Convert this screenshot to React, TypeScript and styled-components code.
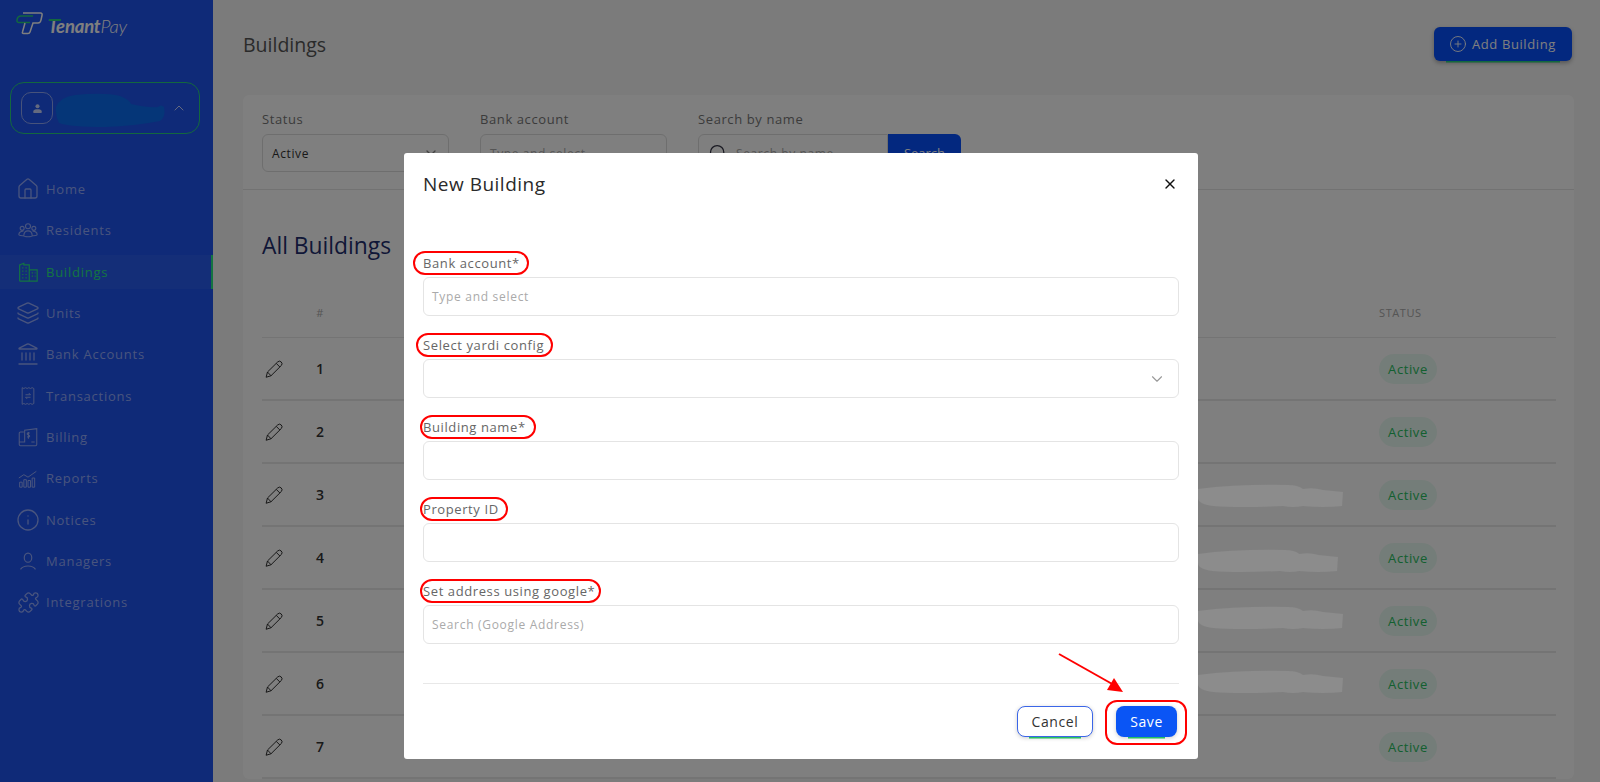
import React from 'react';
import styled, { createGlobalStyle } from 'styled-components';
import { ChevronDown, ChevronUp, CirclePlus, House, Info, Landmark, Layers, Puzzle, Search, X } from 'lucide-react';

const GlobalStyle = createGlobalStyle`
  html, body {
    margin: 0;
    height: 100%;
    overflow: hidden;
    font-family: 'Open Sans', 'Liberation Sans', sans-serif;
    background: #f6f6f6;
  }
  * { box-sizing: border-box; }
`;

const Layout = styled.div`
  display: flex;
  width: 1600px;
  height: 782px;
  overflow: hidden;
`;

const Sidebar = styled.aside`
  flex: 0 0 213px;
  background: #1e54f0;
  padding-top: 12px;
`;

const Logo = styled.div`
  display: flex;
  align-items: center;
  gap: 5px;
  height: 24px;
  padding-left: 16px;
`;

const LogoText = styled.div`
  font-family: Lato, 'Liberation Sans', sans-serif;
  font-style: italic;
  font-size: 18.5px;
  color: #fff;
  letter-spacing: -0.2px;
  margin-top: 4px;

  b {
    position: relative;
    font-weight: 700;
  }
  b::before {
    content: '';
    position: absolute;
    left: 1px;
    top: 4px;
    width: 12px;
    height: 2px;
    background: #26d07c;
  }
  span {
    font-weight: 300;
  }
`;

const UserBox = styled.div`
  display: flex;
  align-items: center;
  height: 52px;
  margin: 46px 13px 0 10px;
  padding-left: 10px;
  border: 1.5px solid #26d07c;
  border-radius: 14px;
  color: #c8d4ff;
`;

const Avatar = styled.div`
  display: flex;
  align-items: center;
  justify-content: center;
  flex: 0 0 32px;
  height: 32px;
  border: 1px solid #8fa7f7;
  border-radius: 10px;
`;

const Scribble = styled.svg`
  flex: 0 0 110px;
  height: 34px;
  margin: 4px 0 0 2px;
`;

const Collapse = styled.div`
  display: flex;
  margin-left: 6px;
`;

const Nav = styled.nav`
  display: flex;
  flex-direction: column;
  gap: 7.33px;
  margin-top: 38px;
`;

const NavItem = styled.div<{ $active?: boolean }>`
  display: flex;
  align-items: center;
  gap: 8px;
  height: 34px;
  padding-left: 18px;
  font-size: 13px;
  letter-spacing: 0.75px;
  color: ${p => (p.$active ? '#26e884' : '#93aafc')};
  background: ${p => (p.$active ? 'rgba(255, 255, 255, 0.05)' : 'transparent')};
  border-right: 2px solid ${p => (p.$active ? '#26e884' : 'transparent')};
`;

const NavIcon = styled.span`
  display: flex;
  align-items: center;
  justify-content: center;
  width: 20px;
  min-width: 0;
  flex: 0 0 20px;
  height: 20px;

  svg {
    flex-shrink: 0;
  }
`;

const Main = styled.main`
  flex: 1;
  padding: 0 26px 0 30px;
`;

const PageHead = styled.header`
  display: flex;
  align-items: center;
  justify-content: space-between;
  height: 88px;
  margin-bottom: 7px;
  padding-right: 2px;
`;

const PageTitle = styled.h1`
  margin: 0;
  font-size: 19.5px;
  font-weight: 400;
  color: #555;
`;

const AddButton = styled.button`
  display: flex;
  align-items: center;
  gap: 5px;
  width: 138px;
  height: 34px;
  padding: 0 0 0 15px;
  border: 0;
  border-radius: 6px;
  background: #0650fe;
  color: #fff;
  font: inherit;
  font-size: 13px;
  letter-spacing: 0.6px;
  box-shadow: 0 13.5px 0 -12px #26d07c, 0 2px 4px rgba(0, 0, 0, 0.3);
`;

const Card = styled.section`
  background: #fff;
  border-radius: 6px;
`;

const Filters = styled.div`
  display: flex;
  gap: 31px;
  padding: 14px 19px 17px;
  border-bottom: 1px solid #e4e4e4;
`;

const FilterGroup = styled.div<{ $width: number }>`
  width: ${p => p.$width}px;
`;

const FilterLabel = styled.div`
  height: 20px;
  margin-bottom: 5px;
  font-size: 13px;
  line-height: 20px;
  letter-spacing: 0.6px;
  color: #777;
`;

const FilterInput = styled.div<{ $muted?: boolean }>`
  display: flex;
  align-items: center;
  justify-content: space-between;
  height: 38px;
  padding: 0 9px;
  border: 1px solid #ddd;
  border-radius: 6px;
  font-size: 12px;
  letter-spacing: 0.6px;
  color: ${p => (p.$muted ? '#aaa' : '#333')};
`;

const SearchBar = styled.div`
  display: flex;
`;

const SearchField = styled(FilterInput)`
  flex: 1;
  justify-content: flex-start;
  gap: 8px;
  border-radius: 6px 0 0 6px;
`;

const SearchButton = styled.button`
  flex: 0 0 73px;
  height: 38px;
  border: 0;
  border-radius: 0 6px 6px 0;
  background: #0650fe;
  color: #fff;
  font: inherit;
  font-size: 13px;
`;

const TableArea = styled.div`
  padding: 0 18px 0 19px;
`;

const SectionTitle = styled.h2`
  margin: 40px 0 26px;
  font-size: 22.8px;
  line-height: 32px;
  font-weight: 400;
  color: #1f2e6e;
`;

const HeadRow = styled.div`
  display: flex;
  align-items: center;
  height: 50px;
  border-bottom: 1px solid #e8e8e8;
  font-size: 11px;
  letter-spacing: 0.6px;
  color: #aaa;
`;

const Row = styled.div`
  display: flex;
  align-items: center;
  height: 63px;
  border-bottom: 2px solid #e8e8e8;
  font-size: 14px;
  font-weight: 600;
  color: #333;
`;

const EditCell = styled.div`
  display: flex;
  flex: 0 0 53px;
  padding-left: 3px;
`;

const IndexCell = styled.div`
  flex: 0 0 10px;
  text-align: center;
`;

const StatusCell = styled.div`
  margin-left: auto;
  width: 177px;
`;

const StatusPill = styled.span`
  display: inline-block;
  width: 58px;
  height: 30px;
  border-radius: 15px;
  background: rgba(38, 208, 124, 0.1);
  color: #26c060;
  font-size: 13px;
  font-weight: 400;
  line-height: 30px;
  letter-spacing: 0.6px;
  text-align: center;
`;

const Overlay = styled.div`
  position: fixed;
  inset: 0;
  display: flex;
  justify-content: center;
  align-items: flex-start;
  padding: 153px 0 0 2px;
  background: rgba(0, 0, 0, 0.5);
`;

const Modal = styled.div`
  position: relative;
  width: 794px;
  height: 606px;
  padding: 17px 19px 0;
  background: #fff;
  border-radius: 3px;
`;

const ModalHead = styled.div`
  display: flex;
  align-items: center;
  justify-content: space-between;
  height: 28px;
  padding-right: 1px;
`;

const ModalTitle = styled.h3`
  margin: 0;
  font-size: 19px;
  font-weight: 400;
  letter-spacing: 0.5px;
  color: #2a2a2a;
`;

const Form = styled.div`
  display: flex;
  flex-direction: column;
  gap: 19px;
  margin-top: 55px;
`;

const Label = styled.label`
  display: block;
  height: 20px;
  margin-bottom: 4px;
  font-size: 13px;
  line-height: 20px;
  letter-spacing: 0.6px;
  color: #666;
`;

/* hand-drawn red ring on the screenshot */
const Ring = styled.span<{ $left: number; $right: number }>`
  position: relative;

  &::after {
    content: '';
    position: absolute;
    top: -3px;
    bottom: -3px;
    left: -${p => p.$left}px;
    right: -${p => p.$right}px;
    border: 2px solid #f00;
    border-radius: 12px;
  }
`;

const Input = styled.div`
  display: flex;
  align-items: center;
  height: 39px;
  padding: 0 12px 0 8px;
  border: 1px solid #e4e4e4;
  border-radius: 6px;
  font-size: 12px;
  letter-spacing: 0.7px;
  color: #aaa;

  svg {
    margin-left: auto;
  }
`;

const Footer = styled.div`
  display: flex;
  justify-content: flex-end;
  gap: 23px;
  margin-top: 39px;
  padding: 22px 2px 0 0;
  border-top: 1px solid #e8e8e8;
`;

const Button = styled.button<{ $primary?: boolean }>`
  position: relative;
  width: ${p => (p.$primary ? 61 : 76)}px;
  height: 31px;
  padding: 0;
  border: ${p => (p.$primary ? '0' : '1px solid #3b66e8')};
  border-radius: 8px;
  background: ${p => (p.$primary ? '#0a55f5' : '#fff')};
  color: ${p => (p.$primary ? '#fff' : '#333')};
  font: inherit;
  font-size: 14px;
  letter-spacing: 0.6px;
  box-shadow: 0 13.5px 0 -12px #26c060, 0 1px 4px rgba(0, 0, 0, 0.2);
`;

const SaveRing = styled.div`
  position: absolute;
  top: -6px;
  right: -10px;
  bottom: -8px;
  left: -11px;
  border: 2px solid #f00;
  border-radius: 12px;
`;

const SaveWrap = styled.div`
  position: relative;
  display: flex;
`;

const Arrow = styled.svg`
  position: absolute;
  left: 650px;
  top: 497px;
  width: 76px;
  height: 44px;
`;

const Smudge = styled.svg<{ $top: number; $width: number }>`
  position: absolute;
  left: 1198px;
  top: ${p => p.$top}px;
  width: ${p => p.$width}px;
  height: 24px;
`;

const Residents = () => (
  <svg width="20" height="20" viewBox="0 0 24 24" fill="none" stroke="currentColor" strokeWidth="1.3">
    <circle cx="12" cy="7.5" r="3" />
    <circle cx="5" cy="10" r="2.4" />
    <circle cx="19" cy="10" r="2.4" />
    <path d="M7 19c0-3.5 2-6 5-6s5 2.500 5 6c0 1.500-10 1.500-10 0z" />
    <path d="M6.500 13.500C3.500 13 1 15 1 17.500c0 1.200 3 1.500 6 1.300M17.500 13.500c3-.5 5.500 1.500 5.500 4 0 1.200-3 1.500-6 1.300" />
  </svg>
);

const Buildings = () => (
  <svg width="20" height="20" viewBox="0 0 24 24" fill="none" stroke="currentColor" strokeWidth="1.4">
    <path d="M2 23V3.500L7 1.500v2h6.500V23M13.500 9.500H23V23H2" />
    <path d="M5 7h1.500M9 7h1.500M5 11h1.500M9 11h1.500M5 15h1.500M9 15h1.500M5 19h1.500M9 19h1.500M16.500 13H18M20 13h1M16.500 17H18M20 17h1" />
  </svg>
);

const Transactions = () => (
  <svg width="20" height="20" viewBox="0 0 24 24" fill="none" stroke="currentColor" strokeWidth="1.2">
    <path d="M5 2l2 1 2-1 2 1 2-1 2 1 2-1 2 1v18l-2 1-2-1-2 1-2-1-2 1-2-1-2 1z" />
    <path d="M9 10.500h6l-2-2M15 13.500H9l2 2" />
  </svg>
);

const Billing = () => (
  <svg width="20" height="20" viewBox="0 0 24 24" fill="none" stroke="currentColor" strokeWidth="1.3">
    <path d="M7 6H3a1.500 1.500 0 0 0-1.500 1.500V21A1.500 1.500 0 0 0 3 22.500h18a1.500 1.500 0 0 0 1.500-1.500V2L8 4v14H2" />
    <path d="M14 7.500c-1-.8-3-.6-3 .8s3 1 3 2.500-2 1.600-3 .8M12.500 6v8M16 18h4" />
  </svg>
);

const Reports = () => (
  <svg width="20" height="20" viewBox="0 0 24 24" fill="none" stroke="currentColor" strokeWidth="1.2">
    <path d="M1 12l6-4 5 3 10-7" />
    <path d="M2 17h3v6H2zM7 14h3v9H7zM12 15h3v8h-3zM17 12h3v11h-3z" />
  </svg>
);

const Managers = () => (
  <svg width="20" height="20" viewBox="0 0 24 24" fill="none" stroke="currentColor" strokeWidth="1.4">
    <ellipse cx="12" cy="8" rx="4.500" ry="5.500" />
    <path d="M3 22c2-3 5-4 9-4s7 1 9 4" />
  </svg>
);

const Pencil = () => (
  <svg width="18" height="18" viewBox="0 0 24 24" fill="none" stroke="#222" strokeWidth="1.25">
    <path d="M1.500 23l1.800-7L17 2.500a3.400 3.400 0 0 1 4.800 4.800L8 21z" />
    <path d="M15 4.500l4.800 4.800M3.300 16L8 21" />
  </svg>
);

const PersonMini = () => (
  <svg width="11" height="11" viewBox="0 0 12 12" fill="currentColor">
    <circle cx="6" cy="3.500" r="2.200" />
    <path d="M1.500 11V9c0-1.500 2-2.200 4.500-2.200s4.500.7 4.500 2.200v2z" />
  </svg>
);

const navItems = [
  { label: 'Home', icon: <House size={24} strokeWidth={1.3} /> },
  { label: 'Residents', icon: <Residents /> },
  { label: 'Buildings', icon: <Buildings />, active: true },
  { label: 'Units', icon: <Layers size={24} strokeWidth={1.3} /> },
  { label: 'Bank Accounts', icon: <Landmark size={24} strokeWidth={1.3} /> },
  { label: 'Transactions', icon: <Transactions /> },
  { label: 'Billing', icon: <Billing /> },
  { label: 'Reports', icon: <Reports /> },
  { label: 'Notices', icon: <Info size={24} strokeWidth={1.3} /> },
  { label: 'Managers', icon: <Managers /> },
  { label: 'Integrations', icon: <Puzzle size={23} strokeWidth={1.3} /> },
];

const fields = [
  { label: 'Bank account*', placeholder: 'Type and select', left: 10, right: 9 },
  { label: 'Select yardi config', left: 7, right: 9, select: true },
  { label: 'Building name*', left: 3, right: 10 },
  { label: 'Property ID', left: 3, right: 9 },
  { label: 'Set address using google*', placeholder: 'Search (Google Address)', left: 3, right: 6 },
];

const smudges = [
  { top: 484, width: 145 },
  { top: 549, width: 140 },
  { top: 606, width: 145 },
  { top: 670, width: 145 },
];

const SmudgeShape = ({ top, width }: { top: number; width: number }) => (
  <Smudge $top={top} $width={width} viewBox="0 0 145 24" preserveAspectRatio="none">
    <path
      d="M0 5Q40 0 90 1Q100 1 105 5Q115 3 125 6L145 8L144 22Q125 24 105 22Q95 24 85 22Q40 24 15 22Q0 20 0 14Z"
      fill="#8c8c8c"
    />
  </Smudge>
);

export default function App() {
  return (
    <>
      <GlobalStyle />
      <Layout>
        <Sidebar>
          <Logo>
            <svg width="27" height="24" viewBox="0 0 27 24" fill="none" strokeWidth="1.5">
              <path d="M17 4H5Q1.500 4 1 8Q.7 10.500 3 10.500H14" stroke="#26d07c" />
              <path d="M7 1H24.500Q26.500 1 26 3.500L25 8Q24.500 11 22 11H17L14 20Q13.500 21.500 12 21.500H7.500Q6 21.500 6.500 20L9 11" stroke="#fff" />
            </svg>
            <LogoText>
              <b>Tenant</b>
              <span>Pay</span>
            </LogoText>
          </Logo>
          <UserBox>
            <Avatar>
              <PersonMini />
            </Avatar>
            <Scribble viewBox="0 0 110 34">
              <path
                d="M1 14Q5 4 20 2Q50-1 65 3Q75 7 76 11Q95 15 103 14Q106 11 109 14Q111 24 105 28Q80 33 50 34Q15 34 4 30Q0 22 1 14Z"
                fill="#0a6cf0"
              />
            </Scribble>
            <Collapse>
              <ChevronUp size={16} strokeWidth={1.5} />
            </Collapse>
          </UserBox>
          <Nav>
            {navItems.map(item => (
              <NavItem key={item.label} $active={item.active}>
                <NavIcon>{item.icon}</NavIcon>
                {item.label}
              </NavItem>
            ))}
          </Nav>
        </Sidebar>
        <Main>
          <PageHead>
            <PageTitle>Buildings</PageTitle>
            <AddButton>
              <CirclePlus size={18} strokeWidth={1.2} />
              Add Building
            </AddButton>
          </PageHead>
          <Card>
            <Filters>
              <FilterGroup $width={187}>
                <FilterLabel>Status</FilterLabel>
                <FilterInput>
                  Active
                  <ChevronDown size={16} color="#888" />
                </FilterInput>
              </FilterGroup>
              <FilterGroup $width={187}>
                <FilterLabel>Bank account</FilterLabel>
                <FilterInput $muted>Type and select</FilterInput>
              </FilterGroup>
              <FilterGroup $width={263}>
                <FilterLabel>Search by name</FilterLabel>
                <SearchBar>
                  <SearchField $muted>
                    <Search size={20} color="#334" strokeWidth={1.5} />
                    Search by name
                  </SearchField>
                  <SearchButton>Search</SearchButton>
                </SearchBar>
              </FilterGroup>
            </Filters>
            <TableArea>
              <SectionTitle>All Buildings</SectionTitle>
              <HeadRow>
                <EditCell />
                <IndexCell>#</IndexCell>
                <StatusCell>STATUS</StatusCell>
              </HeadRow>
              {[1, 2, 3, 4, 5, 6, 7].map(n => (
                <Row key={n}>
                  <EditCell>
                    <Pencil />
                  </EditCell>
                  <IndexCell>{n}</IndexCell>
                  <StatusCell>
                    <StatusPill>Active</StatusPill>
                  </StatusCell>
                </Row>
              ))}
            </TableArea>
          </Card>
        </Main>
      </Layout>
      <Overlay>
        <Modal>
          <ModalHead>
            <ModalTitle>New Building</ModalTitle>
            <X size={16} color="#111" strokeWidth={2} />
          </ModalHead>
          <Form>
            {fields.map(field => (
              <div key={field.label}>
                <Label>
                  <Ring $left={field.left} $right={field.right}>
                    {field.label}
                  </Ring>
                </Label>
                <Input>
                  {field.placeholder}
                  {field.select && <ChevronDown size={18} color="#999" strokeWidth={1.5} />}
                </Input>
              </div>
            ))}
          </Form>
          <Footer>
            <Button>Cancel</Button>
            <SaveWrap>
              <Button $primary>Save</Button>
              <SaveRing />
            </SaveWrap>
          </Footer>
          <Arrow viewBox="0 0 76 44">
            <path d="M5 4L60 35" stroke="#f00" strokeWidth="2" />
            <path d="M69 42L53 40L60 28Z" fill="#f00" />
          </Arrow>
        </Modal>
        {smudges.map(s => (
          <SmudgeShape key={s.top} top={s.top} width={s.width} />
        ))}
      </Overlay>
    </>
  );
}
